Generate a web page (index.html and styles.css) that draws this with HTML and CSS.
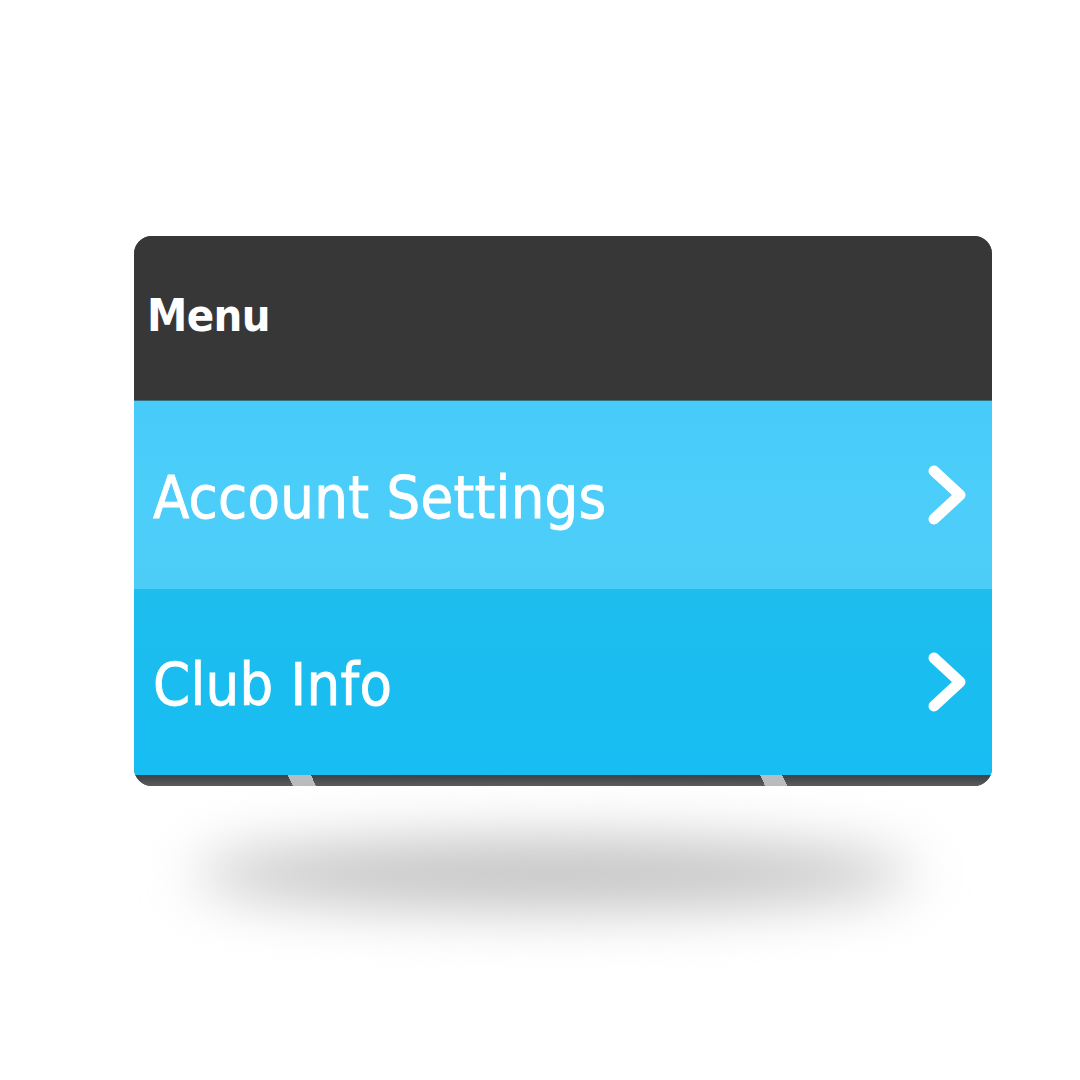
FILE: index.html
```html
<!DOCTYPE html>
<html>
<head>
<meta charset="utf-8">
<link rel="stylesheet" href="styles.css">
</head>
<body>
<div class="stage">
  <div class="card">
    <div class="header"><span class="title">Menu</span></div>
    <div class="row row-light">
      <span class="label">Account Settings</span>
      <svg class="chev" width="46" height="66" viewBox="0 0 46 66"><path d="M9 9 L35 33 L9 57" fill="none" stroke="#fff" stroke-width="11" stroke-linecap="round" stroke-linejoin="round"/></svg>
    </div>
    <div class="row row-dark">
      <span class="label">Club Info</span>
      <svg class="chev" width="46" height="66" viewBox="0 0 46 66"><path d="M9 9 L35 33 L9 57" fill="none" stroke="#fff" stroke-width="11" stroke-linecap="round" stroke-linejoin="round"/></svg>
    </div>
    <div class="strip"></div>
  </div>
  <div class="shadow"></div>
</div>
</body>
</html>
```
FILE: styles.css
```css
html, body {
  margin: 0;
  padding: 0;
  background: #ffffff;
}
.stage {
  width: 1080px;
  height: 1080px;
  box-sizing: border-box;
  padding-top: 236px;
  padding-left: 134px;
  display: flex;
  flex-direction: column;
  align-items: flex-start;
  font-family: "DejaVu Sans Condensed", "DejaVu Sans", sans-serif;
}
.card {
  width: 858px;
  height: 550px;
  border-radius: 18px;
  overflow: hidden;
  display: flex;
  flex-direction: column;
  background: #474a4b;
}
.header {
  height: 165px;
  background: #383737;
  display: flex;
  align-items: center;
  padding-left: 13px;
  padding-bottom: 6px;
  box-sizing: border-box;
  border-bottom: 1px solid #3a6f82;
}
.title {
  color: #ffffff;
  font-weight: bold;
  font-size: 45px;
  letter-spacing: -0.6px;
}
.row {
  display: flex;
  align-items: center;
  justify-content: space-between;
  padding-left: 19px;
  padding-right: 21px;
  box-sizing: border-box;
}
.row-light {
  height: 188px;
  background: linear-gradient(#47cbf8, #4dcefa 60%, #4bcdf7);
}
.row-dark {
  height: 186px;
  background: linear-gradient(#1ebdee, #19bdf1 70%, #16bef3);
}
.label {
  color: #ffffff;
  font-size: 59px;
  letter-spacing: 0.3px;
  padding-top: 4px;
  -webkit-text-stroke: 0.8px #ffffff;
}
.chev {
  display: block;
}
.strip {
  flex: 1;
  background:
    linear-gradient(65deg,
      transparent 0, transparent 144px,
      #b8bcbf 144px, #b8bcbf 165px,
      transparent 165px, transparent 572px,
      #b8bcbf 572px, #b8bcbf 592px,
      transparent 592px),
    linear-gradient(#3d4142, #585c5e);
}
.shadow {
  width: 720px;
  height: 70px;
  margin-top: 53px;
  margin-left: 60px;
  border-radius: 50%;
  background: #c2c2c2;
  filter: blur(28px);
}
```
